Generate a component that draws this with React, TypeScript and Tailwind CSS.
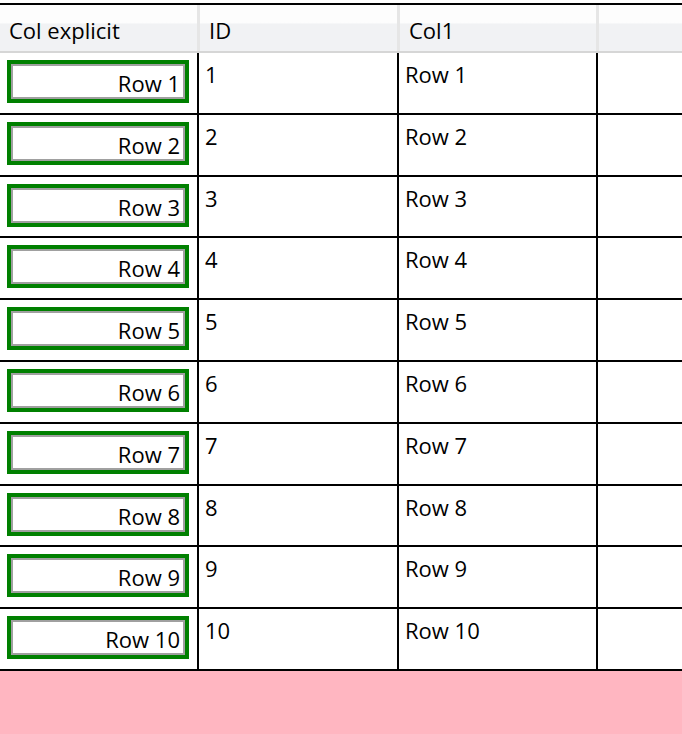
const rows = Array.from({ length: 10 }, (_, i) => ({ id: i + 1, label: `Row ${i + 1}` }));

const font = { fontFamily: '"Open Sans", "Noto Sans", sans-serif' };

export default function App() {
  return (
    <div className="w-[682px] h-[734px] overflow-hidden bg-[#ffb6c1] text-black text-[22px] leading-[28px]" style={font}>
      <div className="bg-white pt-[3px]">
        <div className="border-t-2 border-black">
          {/* header */}
          <div className="flex h-[48px] border-b-2 border-[#d6d6d6] bg-[linear-gradient(to_bottom,#fdfdfd_0%,#fdfdfd_38%,#f1f2f4_42%,#f1f2f4_100%)]">
            <div className="w-[200px] shrink-0 border-r-[3px] border-[#e6e6e6] pl-[9px] pt-[11px]">Col explicit</div>
            <div className="w-[200px] shrink-0 border-r-[3px] border-[#e6e6e6] pl-[9px] pt-[11px]">ID</div>
            <div className="w-[199px] shrink-0 border-r-[3px] border-[#e6e6e6] pl-[9px] pt-[11px]">Col1</div>
            <div className="flex-1" />
          </div>

          {rows.map((r) => (
            <div key={r.id} className="flex h-[61.8px] border-b-2 border-black">
              <div className="w-[199px] shrink-0 border-r-2 border-black pl-[7px] pt-[7px]">
                <div className="h-[43px] w-[182px] border-4 border-[#008000]">
                  <div className="h-full border-2 border-[#a0a0a0] bg-white pr-[3px] pt-[6px] text-right leading-[23px]">{r.label}</div>
                </div>
              </div>
              <div className="w-[200px] shrink-0 border-r-2 border-black pl-[6px] pt-[7px]">{r.id}</div>
              <div className="w-[199px] shrink-0 border-r-2 border-black pl-[6px] pt-[7px]">{r.label}</div>
              <div className="flex-1" />
            </div>
          ))}
        </div>
      </div>
    </div>
  );
}
